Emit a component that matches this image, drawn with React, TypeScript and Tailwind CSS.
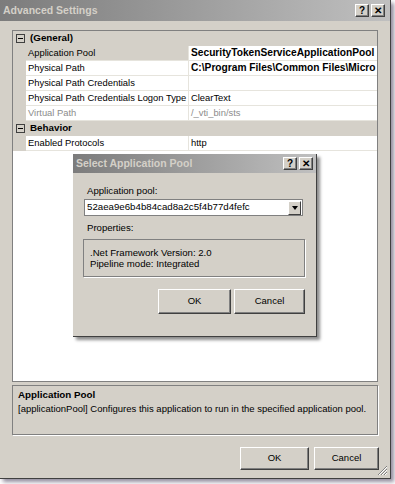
import React from 'react'

const FONT = { fontFamily: '"Liberation Sans", Arial, sans-serif' }

interface Row {
  label: string
  value?: string
  bold?: boolean
  disabled?: boolean
  selected?: boolean
}

interface Category {
  name: string
  rows: Row[]
}

const GRID: Category[] = [
  {
    name: '(General)',
    rows: [
      { label: 'Application Pool', value: 'SecurityTokenServiceApplicationPool', bold: true, selected: true },
      { label: 'Physical Path', value: 'C:\\Program Files\\Common Files\\Micro', bold: true },
      { label: 'Physical Path Credentials', value: '' },
      { label: 'Physical Path Credentials Logon Type', value: 'ClearText' },
      { label: 'Virtual Path', value: '/_vti_bin/sts', disabled: true },
    ],
  },
  {
    name: 'Behavior',
    rows: [{ label: 'Enabled Protocols', value: 'http' }],
  },
]

function CaptionButton({ glyph }: { glyph: string }) {
  return (
    <div className="flex h-[13px] w-[14px] items-center justify-center border-t border-l border-t-white border-l-white border-r border-b border-r-[#404040] border-b-[#404040] bg-[#d4d0c8] shadow-[inset_-1px_-1px_0_#808080] text-[10px] font-bold leading-none text-black">
      {glyph}
    </div>
  )
}

function TitleBar({ title, className }: { title: string; className: string }) {
  return (
    <div className={`flex items-center bg-linear-to-r from-[#7c7c7c] to-[#c0c0c0] ${className}`}>
      <span className="flex-1 text-[10.5px] font-bold text-[#d4d0c8]">{title}</span>
      <div className="flex gap-[2px]">
        <CaptionButton glyph="?" />
        <CaptionButton glyph="✕" />
      </div>
    </div>
  )
}

function PushButton({ label, className }: { label: string; className: string }) {
  return (
    <div
      className={`flex items-center justify-center border-t border-l border-t-white border-l-white border-r border-b border-r-[#404040] border-b-[#404040] bg-[#d4d0c8] shadow-[inset_-1px_-1px_0_#808080] text-[9.5px] text-black ${className}`}
    >
      {label}
    </div>
  )
}

function MinusBox() {
  return (
    <div className="flex h-[9px] w-[9px] items-center justify-center border border-[#404040] bg-[#d4d0c8]">
      <div className="h-px w-[5px] bg-black" />
    </div>
  )
}

function PropertyGrid() {
  return (
    <div className="ml-[12px] mt-[9px] flex h-[352px] w-[366px] flex-col overflow-hidden border border-[#808080] bg-white">
      {GRID.map((cat) => (
        <div key={cat.name}>
          <div className="flex h-[15px] items-center bg-[#d4d0c8]">
            <div className="flex w-[13px] justify-center pl-[2px]">
              <MinusBox />
            </div>
            <span className="pl-[4px] text-[9.8px] font-bold text-black">{cat.name}</span>
          </div>
          {cat.rows.map((r) => (
            <div key={r.label} className="flex h-[15px] bg-[#d4d0c8]">
              <div className="w-[13px]" />
              <div
                className={`flex w-[163px] shrink-0 items-center border-r border-b border-[#e6e4dd] pl-[2px] text-[9.4px] whitespace-nowrap ${
                  r.selected ? 'bg-[#d4d0c8]' : 'bg-white'
                } ${r.disabled ? 'text-[#8c8c8c]' : 'text-black'}`}
              >
                {r.label}
              </div>
              <div
                className={`flex min-w-0 flex-1 items-center overflow-hidden border-b border-[#e6e4dd] bg-white pl-[2px] whitespace-nowrap ${
                  r.bold ? 'text-[10.2px] font-bold' : 'text-[9.4px]'
                } ${r.disabled ? 'text-[#8c8c8c]' : 'text-black'}`}
              >
                {r.value}
              </div>
            </div>
          ))}
        </div>
      ))}
    </div>
  )
}

function SelectPoolDialog() {
  return (
    <div className="absolute left-[73px] top-[154px] flex h-[183px] w-[244px] flex-col border-r border-b border-[#404040] bg-[#d4d0c8] shadow-[3px_3px_3px_rgba(0,0,0,0.45)]">
      <TitleBar title="Select Application Pool" className="h-[19px] pl-[3px] pr-[3px]" />
      <div className="flex flex-col px-[11px]">
        <span className="mt-[12px] pl-[3px] text-[9.6px] leading-[12px] text-black">Application pool:</span>
        <div className="mt-[2px] flex h-[17px] w-[219px] items-center border border-[#808080] bg-white pl-[2px] pr-px">
          <span className="flex-1 text-[9.7px] text-black">52aea9e6b4b84cad8a2c5f4b77d4fefc</span>
          <div className="flex h-[14px] w-[13px] items-center justify-center border-t border-l border-t-white border-l-white border-r border-b border-r-[#404040] border-b-[#404040] bg-[#d4d0c8]">
            <div className="h-0 w-0 border-x-[3.5px] border-t-[4px] border-x-transparent border-t-black" />
          </div>
        </div>
        <span className="mt-[6px] pl-[3px] text-[9.6px] leading-[12px] text-black">Properties:</span>
        <div className="ml-[-1px] mt-[5px] flex h-[38px] w-[222px] flex-col justify-center border border-[#808080] pl-[6px] text-[9.6px] leading-[11px] text-black shadow-[1px_1px_0_white]">
          <span>.Net Framework Version: 2.0</span>
          <span>Pipeline mode: Integrated</span>
        </div>
        <div className="mt-[12px] flex gap-[3px] pl-[74px]">
          <PushButton label="OK" className="h-[25px] w-[74px]" />
          <PushButton label="Cancel" className="h-[25px] w-[72px]" />
        </div>
      </div>
    </div>
  )
}

function ResizeGrip() {
  return (
    <svg width="11" height="11" viewBox="0 0 11 11" className="absolute right-[2px] bottom-[2px]">
      <g strokeWidth="1">
        <line x1="10" y1="1" x2="1" y2="10" stroke="#808080" />
        <line x1="10" y1="4" x2="4" y2="10" stroke="#808080" />
        <line x1="10" y1="7" x2="7" y2="10" stroke="#808080" />
        <line x1="10" y1="2" x2="2" y2="10" stroke="#ffffff" />
        <line x1="10" y1="5" x2="5" y2="10" stroke="#ffffff" />
        <line x1="10" y1="8" x2="8" y2="10" stroke="#ffffff" />
      </g>
    </svg>
  )
}

export default function App() {
  return (
    <div className="relative h-[484px] w-[395px] overflow-hidden bg-white" style={FONT}>
      <div className="relative flex h-[479px] w-[391px] flex-col border-r border-b border-[#404040] bg-[#d4d0c8] shadow-[3px_3px_4px_rgba(60,50,80,0.55)]">
        <TitleBar title="Advanced Settings" className="h-[21px] pl-[3px] pr-[5px]" />

        <PropertyGrid />

        {/* Description */}
        <div className="ml-[12px] mt-[3px] flex h-[50px] w-[366px] flex-col border border-[#808080] px-[5px] pt-[2px] shadow-[1px_1px_0_white]">
          <span className="text-[9.8px] font-bold leading-[14px] text-black">Application Pool</span>
          <span className="text-[9.5px] leading-[13px] text-black">
            [applicationPool] Configures this application to run in the specified application pool.
          </span>
        </div>

        <div className="mt-[12px] flex justify-end gap-[5px] pr-[11px]">
          <PushButton label="OK" className="h-[23px] w-[69px]" />
          <PushButton label="Cancel" className="h-[23px] w-[65px]" />
        </div>

        <ResizeGrip />
        <SelectPoolDialog />
      </div>
    </div>
  )
}
